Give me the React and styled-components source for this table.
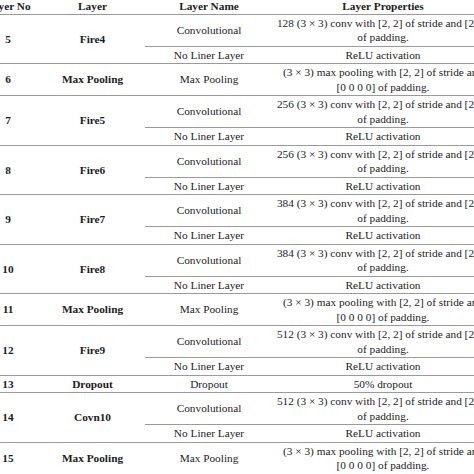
import React from "react";
import styled, { createGlobalStyle } from "styled-components";

const GlobalStyle = createGlobalStyle`
  html, body {
    margin: 0;
    padding: 0;
    background: #fff;
    overflow: hidden;
  }
`;

const Table = styled.div`
  margin-top: -1px;
  margin-left: -30px;
  width: 540px;
  font-family: "Liberation Serif", "Times New Roman", serif;
  font-size: 11.3px;
  line-height: 14.5px;
  color: #1c1c1c;
`;

const Row = styled.div`
  display: grid;
  grid-template-columns: 76px 99px 348px;
  border-bottom: 1.5px solid #9a9a9a;
`;

const HeadRow = styled(Row)`
  grid-template-columns: 76px 99px 128px 220px;
  font-weight: bold;
`;

const HeadCell = styled.div`
  text-align: center;
  white-space: nowrap;
  padding-right: ${(p) => (p.$shift ? "6px" : "0")};
`;

const Cell = styled.div`
  display: flex;
  align-items: center;
  justify-content: center;
  text-align: center;
  font-weight: bold;
  padding-right: ${(p) => (p.$shift ? "6px" : "0")};
`;

const SubList = styled.div`
  display: flex;
  flex-direction: column;
`;

const SubRow = styled.div`
  display: grid;
  grid-template-columns: 128px 220px;
  padding: 1px 0;
  & + & {
    border-top: 1px solid #9a9a9a;
  }
`;

const SubCell = styled.div`
  display: flex;
  flex-direction: column;
  align-items: center;
  justify-content: center;
  text-align: center;
  white-space: nowrap;
`;

const conv = (n) => [
  `${n} (3 × 3) conv with [2, 2] of stride and [2, 2]`,
  "of padding.",
];
const pool = [
  "(3 × 3) max pooling with [2, 2] of stride and",
  "[0 0 0 0] of padding.",
];
const fire = (n) => [
  { name: "Convolutional", props: conv(n) },
  { name: "No Liner Layer", props: ["ReLU activation"] },
];

const rows = [
  { no: 5, layer: "Fire4", subs: fire(128) },
  { no: 6, layer: "Max Pooling", subs: [{ name: "Max Pooling", props: pool }] },
  { no: 7, layer: "Fire5", subs: fire(256) },
  { no: 8, layer: "Fire6", subs: fire(256) },
  { no: 9, layer: "Fire7", subs: fire(384) },
  { no: 10, layer: "Fire8", subs: fire(384) },
  { no: 11, layer: "Max Pooling", subs: [{ name: "Max Pooling", props: pool }] },
  { no: 12, layer: "Fire9", subs: fire(512) },
  { no: 13, layer: "Dropout", subs: [{ name: "Dropout", props: ["50% dropout"] }] },
  { no: 14, layer: "Covn10", subs: fire(512) },
  { no: 15, layer: "Max Pooling", subs: [{ name: "Max Pooling", props: pool }] },
];

export default function App() {
  return (
    <>
      <GlobalStyle />
      <Table>
        <HeadRow>
          <HeadCell>Layer No</HeadCell>
          <HeadCell $shift>Layer</HeadCell>
          <HeadCell>Layer Name</HeadCell>
          <HeadCell>Layer Properties</HeadCell>
        </HeadRow>
        {rows.map((r) => (
          <Row key={r.no}>
            <Cell>{r.no}</Cell>
            <Cell $shift>{r.layer}</Cell>
            <SubList>
              {r.subs.map((s, i) => (
                <SubRow key={i}>
                  <SubCell>{s.name}</SubCell>
                  <SubCell>
                    {s.props.map((line, j) => (
                      <span key={j}>{line}</span>
                    ))}
                  </SubCell>
                </SubRow>
              ))}
            </SubList>
          </Row>
        ))}
      </Table>
    </>
  );
}
